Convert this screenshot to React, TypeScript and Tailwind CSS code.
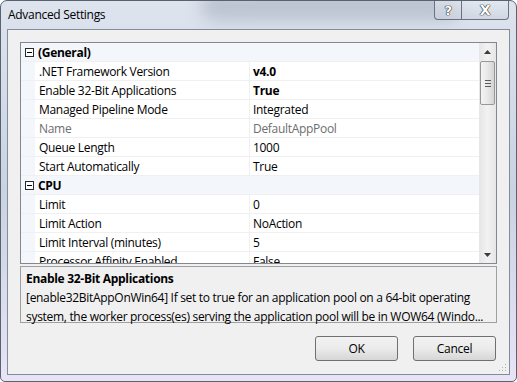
import React from "react";

type Row = { label: string; value: string; cat?: boolean; bold?: boolean; gray?: boolean };

const rows: Row[] = [
  { label: "(General)", value: "", cat: true },
  { label: ".NET Framework Version", value: "v4.0", bold: true },
  { label: "Enable 32-Bit Applications", value: "True", bold: true },
  { label: "Managed Pipeline Mode", value: "Integrated" },
  { label: "Name", value: "DefaultAppPool", gray: true },
  { label: "Queue Length", value: "1000" },
  { label: "Start Automatically", value: "True" },
  { label: "CPU", value: "", cat: true },
  { label: "Limit", value: "0" },
  { label: "Limit Action", value: "NoAction" },
  { label: "Limit Interval (minutes)", value: "5" },
  { label: "Processor Affinity Enabled", value: "False" },
];

function MinusBox() {
  return (
    <svg width="9" height="9" viewBox="0 0 9 9" className="block">
      <rect x="0.5" y="0.5" width="8" height="8" fill="#ffffff" stroke="#2b2b2b" />
      <line x1="2" y1="4.5" x2="7" y2="4.5" stroke="#000" />
    </svg>
  );
}

export default function App() {
  return (
    <div
      className="w-[517px] h-[382px] relative overflow-hidden rounded-t-[7px] rounded-b-[5px] border border-[#5a6270] bg-gradient-to-b from-[#dde4ee] via-[#c9d3e2] to-[#e7e4f6] text-[12px] text-black tracking-[-0.3px]"
      style={{ fontFamily: '"Open Sans", "Noto Sans", sans-serif' }}
    >
      {/* glass highlight */}
      <div className="absolute left-[200px] top-[-10px] w-[260px] h-[30px] rounded-full bg-[#8e96a8] opacity-40 blur-[8px]" />
      {/* title bar */}
      <div className="relative h-[28px] flex items-start">
        <div className="pl-[7px] pt-[5px] text-[12px] text-black">Advanced Settings</div>
        <div className="ml-auto mr-[7px] flex">
          <div className="w-[28px] h-[19px] border border-t-0 border-[#6a7280] rounded-bl-[4px] bg-gradient-to-b from-[#e6ebf2]/60 to-[#c8d0dc]/60 flex items-center justify-center">
            <span className="text-white font-bold text-[13px] leading-none [text-shadow:0_0_1px_#222,0_0_1px_#222,0_0_1px_#222]" style={{ fontFamily: '"DejaVu Sans", sans-serif' }}>?</span>
          </div>
          <div className="w-[47px] h-[19px] border border-t-0 border-l-0 border-[#6a7280] rounded-br-[4px] bg-gradient-to-b from-[#e6ebf2]/60 to-[#c8d0dc]/60 flex items-center justify-center">
            <span className="text-white font-bold text-[14px] leading-none [text-shadow:0_0_1px_#222,0_0_1px_#222,0_0_1px_#222]" style={{ fontFamily: '"DejaVu Sans", sans-serif' }}>X</span>
          </div>
        </div>
      </div>

      {/* client area */}
      <div className="relative mx-[6px] h-[346px] border border-[#838c9a] bg-[#f0f0f0] pl-[12px] pr-[12px] pt-[12px]">
        {/* property grid */}
        <div className="h-[222px] border border-[#828790] bg-white flex overflow-hidden">
          <div className="flex-1 flex flex-col overflow-hidden">
            {rows.map((r, i) =>
              r.cat ? (
                <div key={i} className="h-[19px] shrink-0 flex bg-[#f3f6fb] border-b border-[#f0f0f0]">
                  <div className="w-[14px] shrink-0 flex items-center justify-end pr-[1px] pt-[1px]">
                    <MinusBox />
                  </div>
                  <div className="pl-[3px] pt-[2px] flex items-center font-bold">{r.label}</div>
                </div>
              ) : (
                <div key={i} className="h-[19px] shrink-0 flex border-b border-[#f0f0f0]">
                  <div className="w-[14px] shrink-0 bg-[#f3f6fb]" />
                  <div className={`w-[215px] shrink-0 pl-[4px] pt-[2px] flex items-center border-r border-[#f0f0f0] whitespace-nowrap overflow-hidden ${r.gray ? "text-[#6d6d6d]" : ""}`}>
                    {r.label}
                  </div>
                  <div className={`flex-1 pl-[3px] pt-[2px] flex items-center whitespace-nowrap ${r.bold ? "font-bold" : ""} ${r.gray ? "text-[#6d6d6d]" : ""}`}>
                    {r.value}
                  </div>
                </div>
              )
            )}
          </div>
          {/* scrollbar */}
          <div className="w-[17px] shrink-0 bg-gradient-to-r from-[#e6e6e6] via-[#f2f2f2] to-[#e6e6e6] flex flex-col items-center">
            <div className="h-[17px] w-full flex items-center justify-center">
              <svg width="7" height="4" viewBox="0 0 7 4"><path d="M0 4 L3.5 0 L7 4 Z" fill="#3b3b3b" /></svg>
            </div>
            <div className="mt-[1px] w-[15px] h-[44px] rounded-[2px] border border-[#979797] bg-gradient-to-r from-[#f4f4f4] via-[#e8e8e8] to-[#d4d4d4] flex flex-col items-center justify-center gap-[2px]">
              <div className="w-[6px] h-[1px] bg-[#5a5a5a]" />
              <div className="w-[6px] h-[1px] bg-[#5a5a5a]" />
              <div className="w-[6px] h-[1px] bg-[#5a5a5a]" />
            </div>
            <div className="flex-1" />
            <div className="h-[17px] w-full flex items-center justify-center">
              <svg width="7" height="4" viewBox="0 0 7 4"><path d="M0 0 L7 0 L3.5 4 Z" fill="#3b3b3b" /></svg>
            </div>
          </div>
        </div>

        {/* description */}
        <div className="mt-[2px] h-[57px] border border-[#a0a0a0] pl-[5px] pt-[2px] leading-[19px]">
          <div className="font-bold">Enable 32-Bit Applications</div>
          <div className="whitespace-nowrap">[enable32BitAppOnWin64] If set to true for an application pool on a 64-bit operating</div>
          <div className="whitespace-nowrap">system, the worker process(es) serving the application pool will be in WOW64 (Windo...</div>
        </div>

        {/* buttons */}
        <div className="mt-[13px] flex justify-end gap-[15px] pr-[1px]">
          <button className="w-[83px] h-[25px] rounded-[3px] border border-[#707070] bg-gradient-to-b from-[#f2f2f2] via-[#ebebeb] to-[#d6d6d6] text-[12px]">OK</button>
          <button className="w-[83px] h-[25px] rounded-[3px] border border-[#707070] bg-gradient-to-b from-[#f2f2f2] via-[#ebebeb] to-[#d6d6d6] text-[12px]">Cancel</button>
        </div>

        {/* resize grip */}
        <svg className="absolute right-[2px] bottom-[2px]" width="10" height="10" viewBox="0 0 10 10">
          {[[8, 2], [5, 5], [8, 5], [2, 8], [5, 8], [8, 8]].map(([x, y], i) => (
            <rect key={i} x={x} y={y} width="1" height="1" fill="#b0b0b0" />
          ))}
        </svg>
      </div>
    </div>
  );
}
